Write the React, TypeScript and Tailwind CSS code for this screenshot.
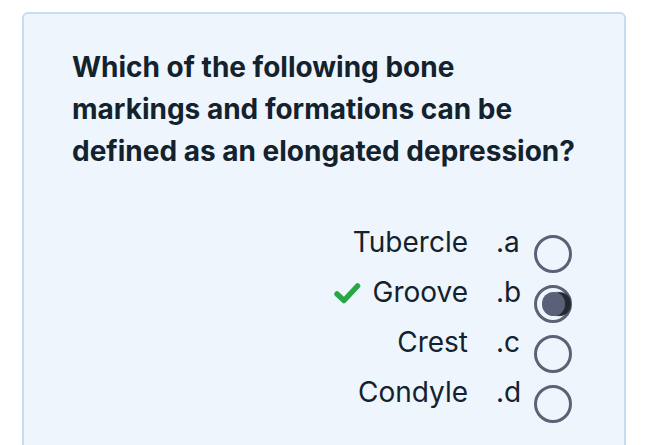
const OPTIONS = [
  { label: "Tubercle", letter: ".a", selected: false, correct: false },
  { label: "Groove", letter: ".b", selected: true, correct: true },
  { label: "Crest", letter: ".c", selected: false, correct: false },
  { label: "Condyle", letter: ".d", selected: false, correct: false },
];

function Check() {
  return (
    <svg width="28" height="22" viewBox="0 0 28 22" className="mt-[4px] mr-[11px]">
      <polyline
        points="4,12 11,18.5 24.5,4"
        fill="none"
        stroke="#28a745"
        strokeWidth="5.5"
        strokeLinecap="round"
        strokeLinejoin="round"
      />
    </svg>
  );
}

function Radio({ selected }: { selected: boolean }) {
  return (
    <div className="w-[38px] h-[38px] rounded-full border-[3px] border-[#5b6275] flex items-center justify-center">
      {selected && (
        <div className="w-[23px] h-[24px] rounded-full bg-[#596078] shadow-[6px_0_1px_#25282f]" />
      )}
    </div>
  );
}

export default function App() {
  return (
    <div className="w-[658px] h-[445px] overflow-hidden bg-white pt-3 pl-[22px] font-['Inter',sans-serif] text-[#13222d]">
      <div className="w-[604px] h-[460px] rounded-md border-2 border-[#c9dcee] bg-[#eef5fd] pt-8 pl-[48px] pr-[52px]">
        <p className="text-[28px] leading-[42px] font-bold whitespace-nowrap">
          Which of the following bone
          <br />
          markings and formations can be
          <br />
          defined as an elongated depression?
        </p>

        <div className="mt-[56px] flex flex-col items-end">
          {OPTIONS.map((o) => (
            <div key={o.letter} className="h-[50px] flex items-start">
              {o.correct && <Check />}
              <span className="text-[28px] leading-[28px]">{o.label}</span>
              <span className="text-[28px] leading-[28px] ml-[28px] w-[23px] text-right">{o.letter}</span>
              <div className="ml-[15px] mt-[7px]">
                <Radio selected={o.selected} />
              </div>
            </div>
          ))}
        </div>
      </div>
    </div>
  );
}
